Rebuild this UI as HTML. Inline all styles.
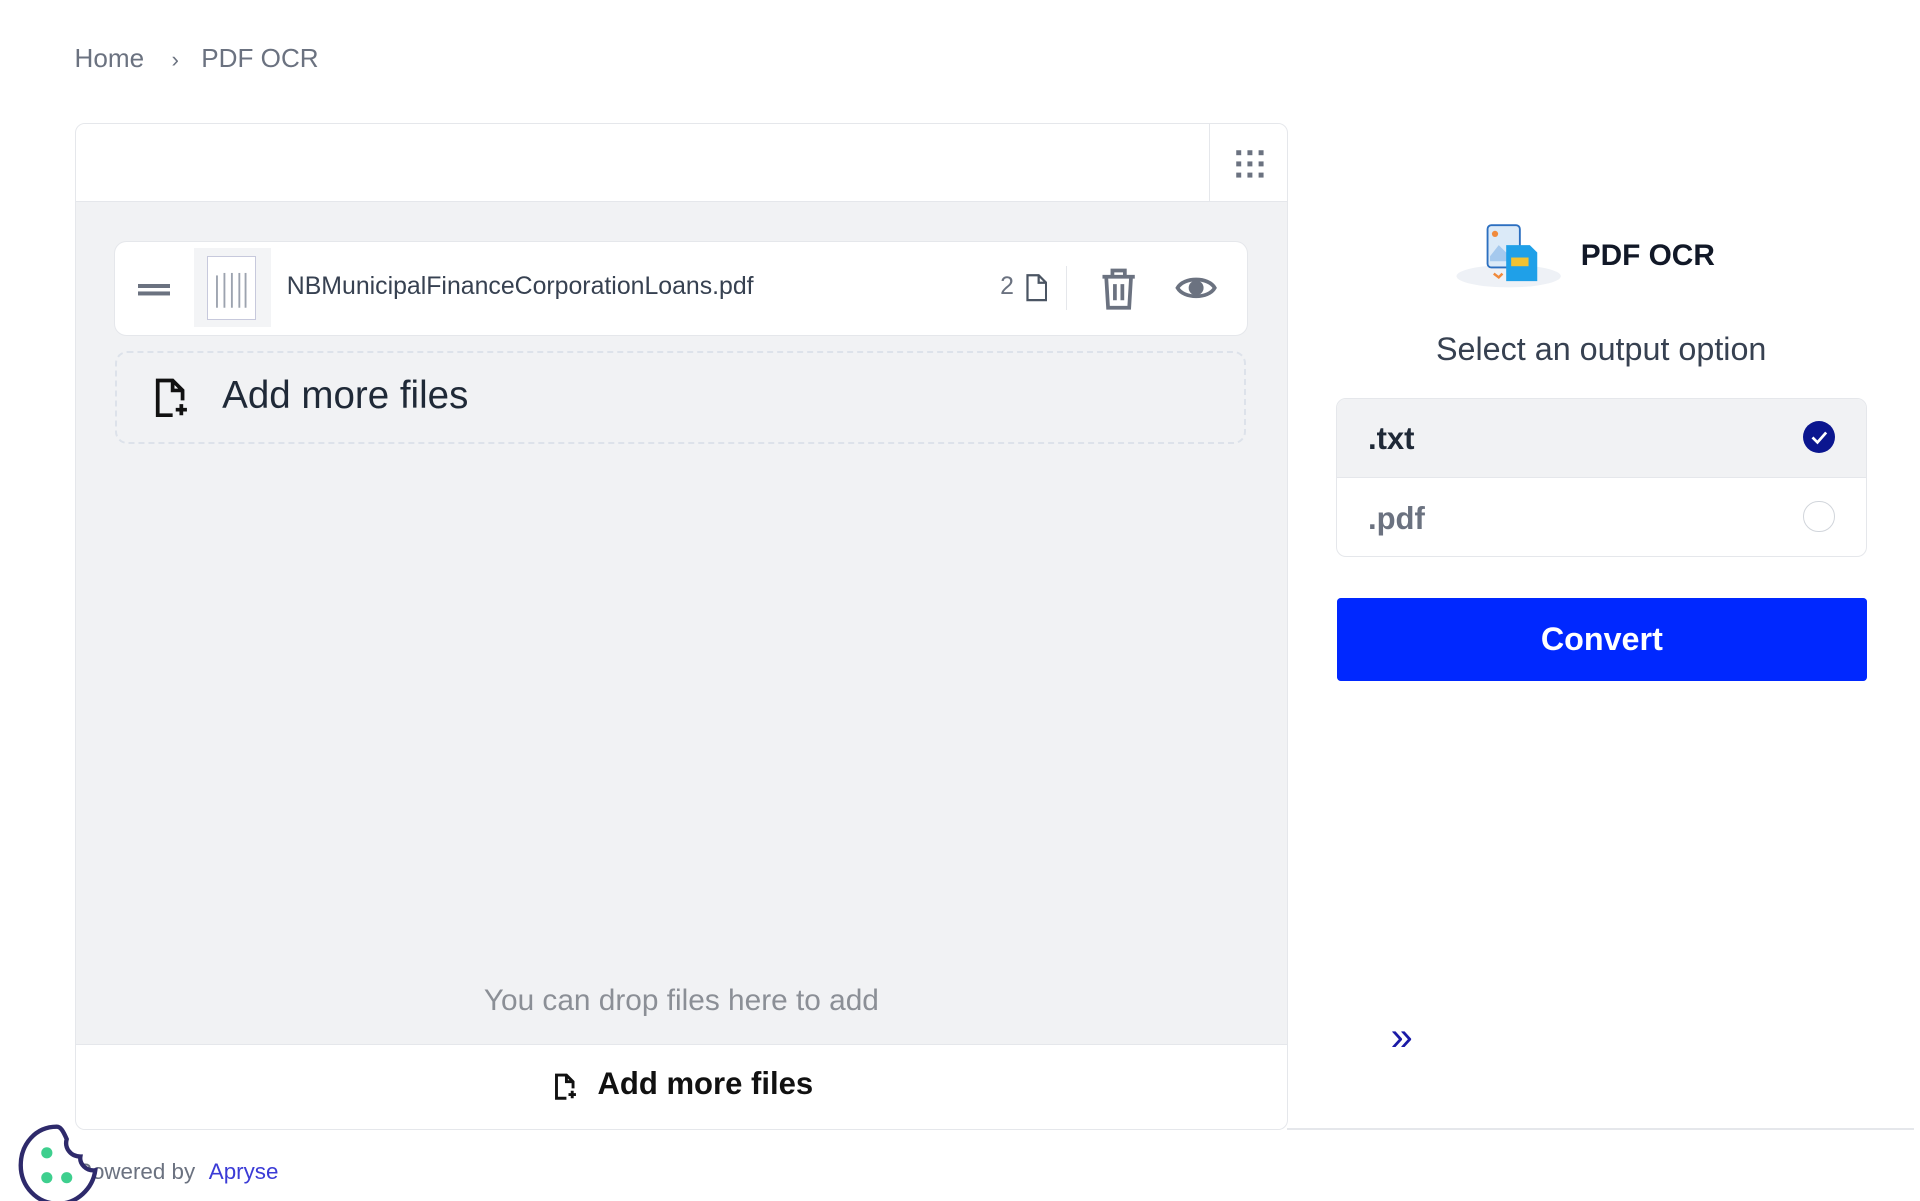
<!DOCTYPE html>
<html><head><meta charset="utf-8"><style>
html,body{margin:0;padding:0;background:#fff;overflow:hidden}
body{width:1920px;height:1201px}
#w{zoom:1.2427;width:1545px;height:966px;position:relative;font-family:"Liberation Sans",sans-serif}
.a{position:absolute}
</style></head><body><div id="w">
<div class="a" style="left:60px;top:35px;font-size:21px;color:#6b7280;white-space:nowrap">Home<span style="margin:0 18px 0 22px;font-size:18px">›</span>PDF OCR</div>

<div class="a" style="left:60px;top:99px;width:975px;height:809px;border:1px solid #e5e7eb;border-radius:8px;overflow:hidden;background:#f1f2f4">
 <div class="a" style="left:0;top:0;width:975px;height:62px;background:#fff;border-bottom:1px solid #e5e7eb"></div>
 <div class="a" style="left:912px;top:0;width:1px;height:62px;background:#e5e7eb"></div>
 <svg class="a" style="left:933px;top:20px" width="24" height="24" viewBox="0 0 24 24" fill="#6b7280"><rect x="1" y="1" width="4" height="4"/><rect x="10" y="1" width="4" height="4"/><rect x="19" y="1" width="4" height="4"/><rect x="1" y="10" width="4" height="4"/><rect x="10" y="10" width="4" height="4"/><rect x="19" y="10" width="4" height="4"/><rect x="1" y="19" width="4" height="4"/><rect x="10" y="19" width="4" height="4"/><rect x="19" y="19" width="4" height="4"/></svg>

 <div class="a" style="left:31px;top:94px;width:911px;height:75px;background:#fff;border:1px solid #e5e7eb;border-radius:10px"></div>
 <div class="a" style="left:50px;top:129px;width:26px;height:3px;background:#6b7280;box-shadow:0 6px 0 #6b7280"></div>
 <div class="a" style="left:95px;top:100px;width:62px;height:63px;background:#f3f4f6"></div>
 <div class="a" style="left:106px;top:106px;width:38px;height:50px;background:#fff;border:1px solid #c7c9dc"></div>
 <svg class="a" style="left:110px;top:112px" width="30" height="40"><g stroke="#9ca3af" stroke-width="1.5"><line x1="4" y1="10" x2="4" y2="36"/><line x1="10" y1="8" x2="10" y2="36"/><line x1="16" y1="8" x2="16" y2="36"/><line x1="22" y1="8" x2="22" y2="36"/><line x1="27" y1="8" x2="27" y2="36"/></g></svg>
 <div class="a" style="left:170px;top:120px;font-size:20px;color:#374151">NBMunicipalFinanceCorporationLoans.pdf</div>
 <div class="a" style="left:744px;top:120px;font-size:20px;color:#6b7280">2</div>
 <svg class="a" style="left:764px;top:121px" width="18" height="22" viewBox="0 0 18 22"><path d="M2 1h9l6 6v14H2z M11 1v6h6" fill="none" stroke="#4b5563" stroke-width="1.8"/></svg>
 <div class="a" style="left:797px;top:114px;width:1px;height:36px;background:#e5e7eb"></div>
 <svg class="a" style="left:824px;top:116px" width="30" height="34" viewBox="0 0 30 34" fill="none" stroke="#6b7280" stroke-width="3"><path d="M2 7h26M10 7V2h10v5M5 7l1.5 25h17L25 7M12 13v13M18 13v13"/></svg>
 <svg class="a" style="left:885px;top:120px" width="34" height="24" viewBox="0 0 34 24"><path d="M2 12C7 3 27 3 32 12C27 21 7 21 2 12Z" fill="none" stroke="#6b7280" stroke-width="3"/><circle cx="17" cy="12" r="6" fill="#6b7280"/></svg>

 <div class="a" style="left:32px;top:183px;width:907px;height:71px;border:2px dashed #dde2ea;border-radius:10px"></div>
 <svg class="a" style="left:63px;top:204px" width="30" height="32" viewBox="0 0 30 32" fill="none" stroke="#111" stroke-width="3"><path d="M15 30H3V2h12l8 8v8M15 2v8h8M22 21v9M17.5 25.5h9"/></svg>
 <div class="a" style="left:118px;top:201px;font-size:31px;color:#1f2937">Add more files</div>

 <div class="a" style="left:0;top:692px;width:975px;text-align:center;font-size:24px;color:#8b8f96">You can drop files here to add</div>
 <div class="a" style="left:0;top:740px;width:975px;height:69px;background:#fff;border-top:1px solid #e5e7eb"></div>
 <svg class="a" style="left:385px;top:764px" width="20" height="22" viewBox="0 0 30 32" fill="none" stroke="#111" stroke-width="3.5"><path d="M15 30H3V2h12l8 8v8M15 2v8h8M22 21v9M17.5 25.5h9"/></svg>
 <div class="a" style="left:420px;top:758px;font-size:25px;font-weight:bold;color:#111">Add more files</div>
</div>

<svg class="a" style="left:1170px;top:176px" width="88" height="58" viewBox="0 0 88 58"><ellipse cx="44" cy="46" rx="42" ry="9" fill="#eef1f6"/><rect x="27" y="5" width="26" height="34" rx="3" fill="#dbeaf8" stroke="#2c6fc0" stroke-width="1.5"/><path d="M29 30l7-9 6 6 5-4 5 5v6H29z" fill="#a5c9ee"/><circle cx="33" cy="12" r="2.5" fill="#f08a3c"/><path d="M42 21h19l6 6v23H42z" fill="#1fa0e8"/><rect x="46" y="31" width="14" height="7" fill="#f1c232"/><path d="M32 44l4 3 3-3" stroke="#f08a3c" stroke-width="2" fill="none"/></svg>
<div class="a" style="left:1272px;top:192px;font-size:24px;font-weight:bold;color:#111827">PDF OCR</div>
<div class="a" style="left:1075px;top:266px;width:427px;text-align:center;font-size:26px;color:#374151">Select an output option</div>

<div class="a" style="left:1075px;top:320px;width:426px;height:127px;border:1px solid #e5e7eb;border-radius:8px;overflow:hidden">
 <div class="a" style="left:0;top:0;width:426px;height:63px;background:#f1f2f4;border-bottom:1px solid #e5e7eb"></div>
 <div class="a" style="left:25px;top:18px;font-size:25px;font-weight:bold;color:#1f2937">.txt</div>
 <div class="a" style="left:375px;top:18px;width:26px;height:26px;border-radius:50%;background:#0b168f"></div>
 <svg class="a" style="left:381px;top:25px" width="14" height="12"><path d="M2 6l4 4 7-8" stroke="#fff" stroke-width="2.2" fill="none"/></svg>
 <div class="a" style="left:25px;top:82px;font-size:25px;font-weight:bold;color:#6b7280">.pdf</div>
 <div class="a" style="left:375px;top:82px;width:24px;height:24px;border-radius:50%;border:1px solid #d1d5db"></div>
</div>

<div class="a" style="left:1076px;top:481px;width:426px;height:67px;background:#0028ff;border-radius:3px;color:#fff;font-size:26px;font-weight:bold;text-align:center;line-height:67px">Convert</div>

<div class="a" style="left:1119px;top:817px;font-size:32px;color:#1a1aa6;line-height:36px">»</div>
<div class="a" style="left:1036px;top:908px;width:504px;height:1px;background:#e5e7eb"></div>

<div class="a" style="left:62px;top:933px;font-size:18px;color:#6b7280">Powered by <span style="color:#3b3bd6;margin-left:6px">Apryse</span></div>
<svg class="a" style="left:14px;top:904px" width="66" height="68" viewBox="0 0 66 68"><path d="M32 3C15 3 3 17 3 34c0 17 13 31 30 31 15 0 28-12 30-27-7 1-13-5-12-11-8 0-13-7-11-14-3-7-5-10-8-10z" fill="#fff" stroke="#2e2a6b" stroke-width="3.5"/><circle cx="24" cy="24" r="4.5" fill="#3ecf8e"/><circle cx="24" cy="44" r="4.5" fill="#3ecf8e"/><circle cx="40" cy="44" r="4.5" fill="#3ecf8e"/></svg>
</div></body></html>
